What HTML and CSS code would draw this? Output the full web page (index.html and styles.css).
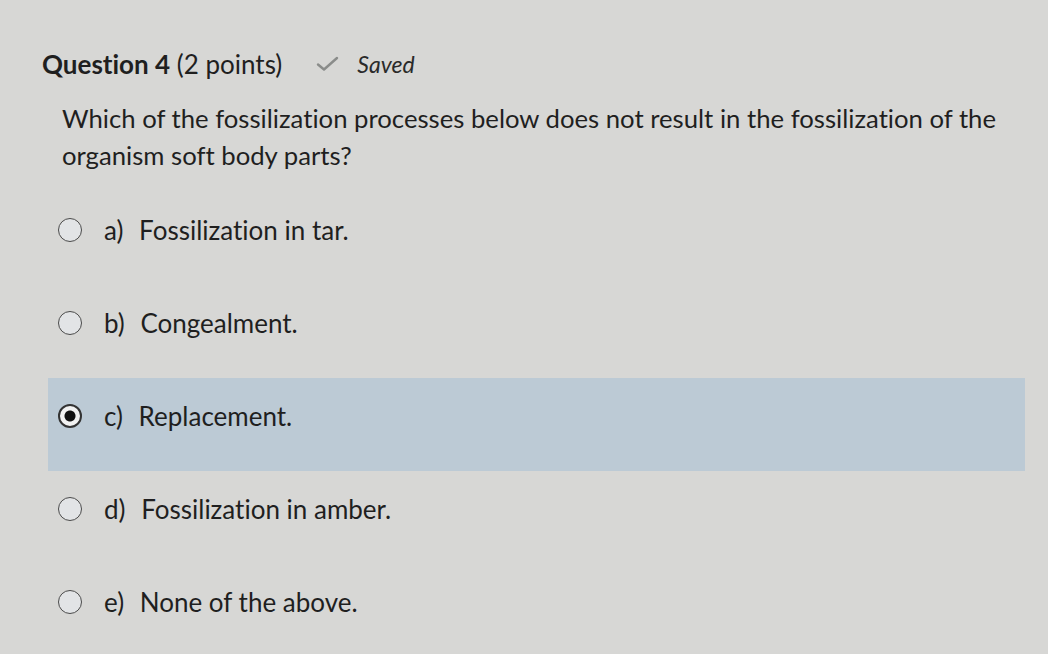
FILE: index.html
```html
<!DOCTYPE html>
<html lang="en">
<head>
    <meta charset="UTF-8">
    <meta name="viewport" content="width=device-width, initial-scale=1.0">
    <title>Question 4</title>
    <link rel="stylesheet" href="styles.css">
</head>
<body>
    <div class="quiz">
        <div class="q-head">
            <h2><strong>Question 4</strong> (2 points)</h2>
            <span class="saved">
                <svg class="check" width="24" height="16" viewBox="0 0 24 16">
                    <path d="M2 8.5 L8 13.5 L21 2" fill="none" stroke="#8a8c8a" stroke-width="2.4" stroke-linecap="round" stroke-linejoin="round"/>
                </svg>
                Saved
            </span>
        </div>
        <p class="q-text">Which of the fossilization processes below does not result in the fossilization of the organism soft body parts?</p>
        <ul class="options">
            <li class="option">
                <span class="radio"></span>
                <span class="label"><span class="letter">a)</span> Fossilization in tar.</span>
            </li>
            <li class="option">
                <span class="radio"></span>
                <span class="label"><span class="letter">b)</span> Congealment.</span>
            </li>
            <li class="option selected">
                <span class="radio"></span>
                <span class="label"><span class="letter">c)</span> Replacement.</span>
            </li>
            <li class="option">
                <span class="radio"></span>
                <span class="label"><span class="letter">d)</span> Fossilization in amber.</span>
            </li>
            <li class="option">
                <span class="radio"></span>
                <span class="label"><span class="letter">e)</span> None of the above.</span>
            </li>
        </ul>
    </div>
</body>
</html>
```

FILE: styles.css
```css
body {
    font-family: 'Lato', 'Liberation Sans', sans-serif;
    font-variant-ligatures: none;
    margin: 0;
    padding: 0;
    background: #d7d7d5;
    color: #1f1f1f;
}
.quiz {
    padding: 49px 23px 0 42px;
}
.q-head {
    display: flex;
    align-items: center;
    height: 30px;
}
.q-head h2 {
    margin: 0;
    font-size: 26px;
    font-weight: normal;
    line-height: 30px;
}
.q-head strong {
    font-weight: bold;
}
.saved {
    display: flex;
    align-items: center;
    gap: 17px;
    margin-left: 34px;
    font-style: italic;
    font-size: 23px;
    color: #2a2a2a;
}
.q-text {
    margin: 21px 0 0 20px;
    font-size: 25.7px;
    line-height: 37px;
    max-width: 960px;
}
.options {
    list-style: none;
    margin: 18px 0 0 6px;
    padding: 0;
}
.option {
    display: flex;
    align-items: center;
    height: 93px;
    box-sizing: border-box;
    padding: 0 0 18px 10px;
}
.option.selected {
    background: #bccad5;
}
.radio {
    width: 24px;
    height: 24px;
    box-sizing: border-box;
    border: 1.5px solid #4a4a4a;
    border-radius: 50%;
    background: #e2e4e6;
    flex-shrink: 0;
}
.option.selected .radio {
    border: 2px solid #333;
    background: radial-gradient(circle, #111 0 5px, #f2f2f2 6px);
}
.label {
    margin-left: 22px;
    font-size: 26px;
    line-height: 30px;
}
.letter {
    margin-right: 9px;
}
```
